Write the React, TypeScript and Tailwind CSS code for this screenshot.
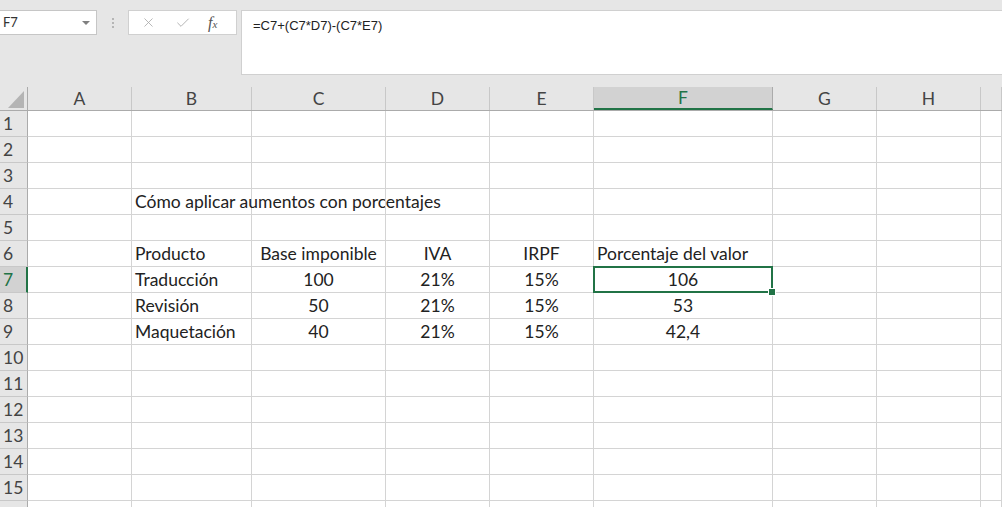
import { X, Check } from "lucide-react";

type Align = "l" | "c";
type Col = { key: string; w: string };

const cols: Col[] = [
  { key: "A", w: "w-[104px]" },
  { key: "B", w: "w-[120px]" },
  { key: "C", w: "w-[134px]" },
  { key: "D", w: "w-[104px]" },
  { key: "E", w: "w-[104px]" },
  { key: "F", w: "w-[179px]" },
  { key: "G", w: "w-[104px]" },
  { key: "H", w: "w-[104px]" },
  { key: "I", w: "flex-1" },
];

const data: Record<number, Record<string, [string, Align]>> = {
  4: { B: ["Cómo aplicar aumentos con porcentajes", "l"] },
  6: {
    B: ["Producto", "l"],
    C: ["Base imponible", "c"],
    D: ["IVA", "c"],
    E: ["IRPF", "c"],
    F: ["Porcentaje del valor", "l"],
  },
  7: { B: ["Traducción", "l"], C: ["100", "c"], D: ["21%", "c"], E: ["15%", "c"], F: ["106", "c"] },
  8: { B: ["Revisión", "l"], C: ["50", "c"], D: ["21%", "c"], E: ["15%", "c"], F: ["53", "c"] },
  9: { B: ["Maquetación", "l"], C: ["40", "c"], D: ["21%", "c"], E: ["15%", "c"], F: ["42,4", "c"] },
};

const rows = Array.from({ length: 16 }, (_, i) => i + 1);

export default function App() {
  return (
    <div className="w-[1002px] h-[507px] overflow-hidden bg-[#e6e6e6] font-['Lato',sans-serif] text-[#222]">
      {/* name box + formula bar */}
      <div className="h-[87px] flex items-start pt-[10px]">
        <div className="w-[97px] h-[25px] bg-white border border-[#c6c6c6] border-l-0 flex items-center justify-between pl-[3px] pr-[6px] text-[13px] text-[#333]">
          <span>F7</span>
          <span className="w-0 h-0 border-l-[4px] border-r-[4px] border-t-[4px] border-l-transparent border-r-transparent border-t-[#808080]" />
        </div>
        <div className="w-[31px] h-[25px] flex flex-col items-center justify-center gap-[2px]">
          <span className="w-[2px] h-[2px] bg-[#b5b5b5]" />
          <span className="w-[2px] h-[2px] bg-[#b5b5b5]" />
          <span className="w-[2px] h-[2px] bg-[#b5b5b5]" />
        </div>
        <div className="w-[109px] h-[25px] bg-white border border-[#d0d0d0] flex items-center pl-[12px] gap-[19px]">
          <X size={15} strokeWidth={1.3} className="text-[#a8a8a8]" />
          <Check size={16} strokeWidth={1.3} className="text-[#a8a8a8]" />
          <span className="font-['Liberation_Serif',serif] italic text-[16px] text-[#555] leading-none -ml-[2px]">
            f<span className="text-[11px]">x</span>
          </span>
        </div>
        <div className="ml-[4px] flex-1 h-[65px] bg-white border border-[#d0d0d0] border-r-0 pl-[11px] pt-[5px] text-[13px] text-[#222] font-['Liberation_Sans',sans-serif]">
          =C7+(C7*D7)-(C7*E7)
        </div>
      </div>

      {/* column headers */}
      <div className="flex h-[24px] border-b border-[#ababab]">
        <div className="w-[28px] border-r border-[#ababab] flex items-end justify-end pr-[3px] pb-[2px]">
          <svg width="16" height="17" viewBox="0 0 16 17">
            <polygon points="16,0 16,17 0,17" fill="#b4b4b4" />
          </svg>
        </div>
        {cols.map((c) =>
          c.key === "F" ? (
            <div
              key={c.key}
              className={`${c.w} bg-[#d2d2d2] border-r border-[#ababab] border-b-2 border-b-[#217346] flex items-center justify-center text-[17.5px] leading-none text-[#217346]`}
            >
              {c.key}
            </div>
          ) : (
            <div
              key={c.key}
              className={`${c.w} border-r border-[#c8c8c8] flex items-center justify-center text-[17.5px] leading-none text-[#444]`}
            >
              {c.key === "I" ? "" : c.key}
            </div>
          )
        )}
      </div>

      {/* rows */}
      {rows.map((r) => (
        <div key={r} className="flex h-[26px] bg-white">
          <div
            className={
              r === 7
                ? "w-[28px] bg-[#d2d2d2] border-r-2 border-r-[#217346] border-b border-[#c8c8c8] pl-[3px] text-[17.5px] leading-[26px] text-[#217346]"
                : "w-[28px] bg-[#e6e6e6] border-r border-[#ababab] border-b border-b-[#c8c8c8] pl-[3px] text-[17.5px] leading-[26px] text-[#444]"
            }
          >
            {r < 16 ? r : ""}
          </div>
          {cols.map((c) => {
            const cell = data[r]?.[c.key];
            const sel = r === 7 && c.key === "F";
            return (
              <div
                key={c.key}
                className={`${c.w} relative border-r border-b border-[#d4d4d4] text-[17.5px] leading-[26px] whitespace-nowrap ${
                  cell?.[1] === "c" ? "text-center" : "pl-[3px]"
                }`}
              >
                {cell?.[0]}
                {sel && (
                  <div className="absolute z-10 -left-[1px] -top-[1px] -right-[1px] -bottom-[1px] border-2 border-[#217346]">
                    <div className="absolute -right-[5px] -bottom-[5px] w-[8px] h-[8px] bg-[#217346] border border-white" />
                  </div>
                )}
              </div>
            );
          })}
        </div>
      ))}
    </div>
  );
}
